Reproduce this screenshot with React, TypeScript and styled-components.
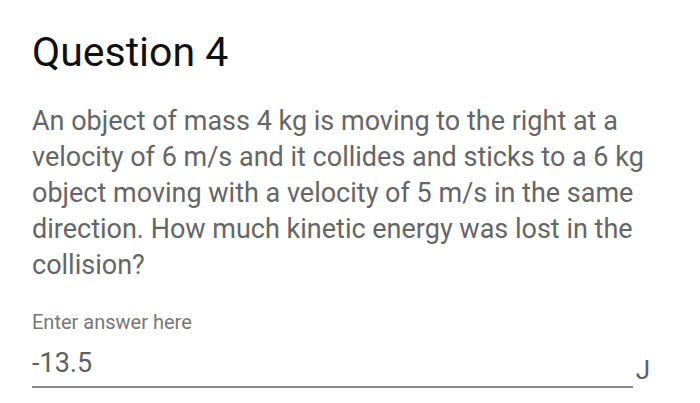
import React from "react";
import styled, { createGlobalStyle } from "styled-components";

const Global = createGlobalStyle`
  html, body { margin: 0; padding: 0; background: #ffffff; }
  body { font-family: Roboto, "Noto Sans", Arial, sans-serif; }
  * { box-sizing: border-box; }
`;

const Page = styled.main`
  width: 700px;
  height: 403px;
  padding: 28px 32px 0 32px;
  overflow: hidden;
`;

const Title = styled.h1`
  margin: 0;
  font-size: 41px;
  line-height: 48px;
  font-weight: 400;
  color: #111111;
`;

const Prompt = styled.p`
  margin: 27px 0 0 0;
  font-size: 27px;
  line-height: 36px;
  color: #666666;
`;

const Label = styled.label`
  display: block;
  margin-top: 27px;
  font-size: 20px;
  line-height: 24px;
  color: #777777;
`;

const AnswerRow = styled.div`
  display: flex;
  align-items: flex-end;
  margin-top: 13px;
`;

const Field = styled.div`
  flex: 1;
  font-size: 27px;
  line-height: 32px;
  color: #616161;
  padding-bottom: 7px;
  border-bottom: 2px solid #8a8a8a;
`;

const Unit = styled.span`
  font-size: 26px;
  line-height: 32px;
  color: #616161;
  margin: 0 18px 2px 3px;
`;

export default function App() {
  return (
    <>
      <Global />
      <Page>
        <Title>Question 4</Title>
        <Prompt>
          An object of mass 4 kg is moving to the right at a velocity of 6 m/s
          and it collides and sticks to a 6 kg object moving with a velocity of
          5 m/s in the same direction. How much kinetic energy was lost in the
          collision?
        </Prompt>
        <Label>Enter answer here</Label>
        <AnswerRow>
          <Field>-13.5</Field>
          <Unit>J</Unit>
        </AnswerRow>
      </Page>
    </>
  );
}
